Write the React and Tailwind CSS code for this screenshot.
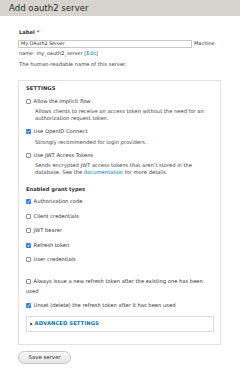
import React from "react";

const font = { fontFamily: '"DejaVu Sans", "Liberation Sans", sans-serif' };

function Box({ checked }) {
  if (checked) {
    return (
      <span className="inline-flex w-[5px] h-[5px] rounded-[1px] bg-[#2f7ee6] items-center justify-center shrink-0 align-middle">
        <svg width="5" height="5" viewBox="0 0 10 10">
          <path d="M2.2 5.2 L4.2 7.2 L7.8 2.6" fill="none" stroke="#fff" strokeWidth="1.6" />
        </svg>
      </span>
    );
  }
  return (
    <span className="inline-block w-[5px] h-[5px] rounded-[1px] border-[0.6px] border-[#8e8e8e] bg-white shrink-0 align-middle" />
  );
}

function Check({ checked, label, className = "" }) {
  return (
    <div className={"flex items-center h-[7px] leading-[7px] " + className}>
      <Box checked={checked} />
      <span className="ml-[2.6px] text-[5.2px] text-[#333]">{label}</span>
    </div>
  );
}

export default function App() {
  return (
    <div className="w-[240px] h-[368px] bg-white overflow-hidden text-[#333]" style={font}>
      <div className="h-[16px] bg-[#d6d4cc] flex items-center pl-[9px]">
        <span className="text-[8.6px] text-[#2d2d2d] leading-none">Add oauth2 server</span>
      </div>
      <div className="pl-[18px] pr-[19px]">
        <div className="mt-[13px] pl-[1px] h-[7px] leading-[7px] text-[5.2px] font-bold text-[#333]">
          Label <span className="text-[#e2362b]">*</span>
        </div>
        <div className="mt-[4px] flex items-center">
          <div className="w-[174px] h-[8px] border-[0.6px] border-[#c8c8c8] bg-white flex items-center pl-[2px] text-[4.8px] text-[#222] leading-none">
            My OAuth2 Server
          </div>
          <span className="ml-[2px] text-[5px] text-[#333]">Machine</span>
        </div>
        <div className="mt-[1.5px] pl-[1px] h-[7px] leading-[7px] text-[5px] text-[#333]">
          name: my_oauth2_server [<span className="text-[#0074bd]">Edit</span>]
        </div>
        <div className="mt-[4.7px] pl-[1px] h-[7px] leading-[7px] text-[5.2px] text-[#444]">
          The human-readable name of this server.
        </div>

        <div className="mt-[11.8px] border-[1px] border-[#e1e1e1] pl-[7px] pr-[6px] pt-[4.2px] pb-[12px]">
          <div className="h-[7px] leading-[7px] text-[5.2px] font-bold text-[#333] tracking-[0.1px]">SETTINGS</div>

          <Check className="mt-[5.8px]" label="Allow the implicit flow" />
          <p className="mt-[3.4px] pl-[9px] pr-[4px] text-[5.2px] leading-[6.8px] text-[#444]">
            Allows clients to receive an access token without the need for an authorization request token.
          </p>

          <Check className="mt-[6px]" checked label="Use OpenID Connect" />
          <p className="mt-[4px] pl-[9px] pr-[4px] text-[5.2px] leading-[6.8px] text-[#444]">
            Strongly recommended for login providers.
          </p>

          <Check className="mt-[5.8px]" label="Use JWT Access Tokens" />
          <p className="mt-[3px] pl-[9px] pr-[4px] text-[5.2px] leading-[7.2px] text-[#444]">
            Sends encrypted JWT access tokens that aren’t stored in the database. See the{" "}
            <a className="text-[#0074bd]">documentation</a> for more details.
          </p>

          <div className="mt-[9.6px] h-[7px] leading-[7px] text-[5.2px] font-bold text-[#333]">Enabled grant types</div>

          <Check className="mt-[5.7px]" checked label="Authorization code" />
          <Check className="mt-[7.5px]" label="Client credentials" />
          <Check className="mt-[7.5px]" label="JWT bearer" />
          <Check className="mt-[7.5px]" checked label="Refresh token" />
          <Check className="mt-[7.5px]" label="User credentials" />

          <div className="mt-[12.8px] text-[5.2px] leading-[10px] text-[#333] pr-[2px]">
            <Box />
            <span className="ml-[2.6px]">Always issue a new refresh token after the existing one has been used</span>
          </div>

          <Check className="mt-[5.8px]" checked label="Unset (delete) the refresh token after it has been used" />

          <div className="mt-[7.2px] h-[16px] border-[1px] border-[#dcdcdc] flex items-center pl-[3px]">
            <svg width="3" height="4" viewBox="0 0 3 4" className="shrink-0">
              <path d="M0.4 0.4 L2.6 2 L0.4 3.6 Z" fill="#222" />
            </svg>
            <span className="ml-[1.6px] text-[5.2px] font-bold text-[#0074bd] tracking-[0.1px]">ADVANCED SETTINGS</span>
          </div>
        </div>

        <div className="mt-[6px] w-[53px] h-[12.5px] rounded-full border-[0.6px] border-[#c4c4c4] bg-gradient-to-b from-[#fafafa] to-[#e4e4e4] flex items-center justify-center text-[5.4px] text-[#333]">
          Save server
        </div>
      </div>
    </div>
  );
}
